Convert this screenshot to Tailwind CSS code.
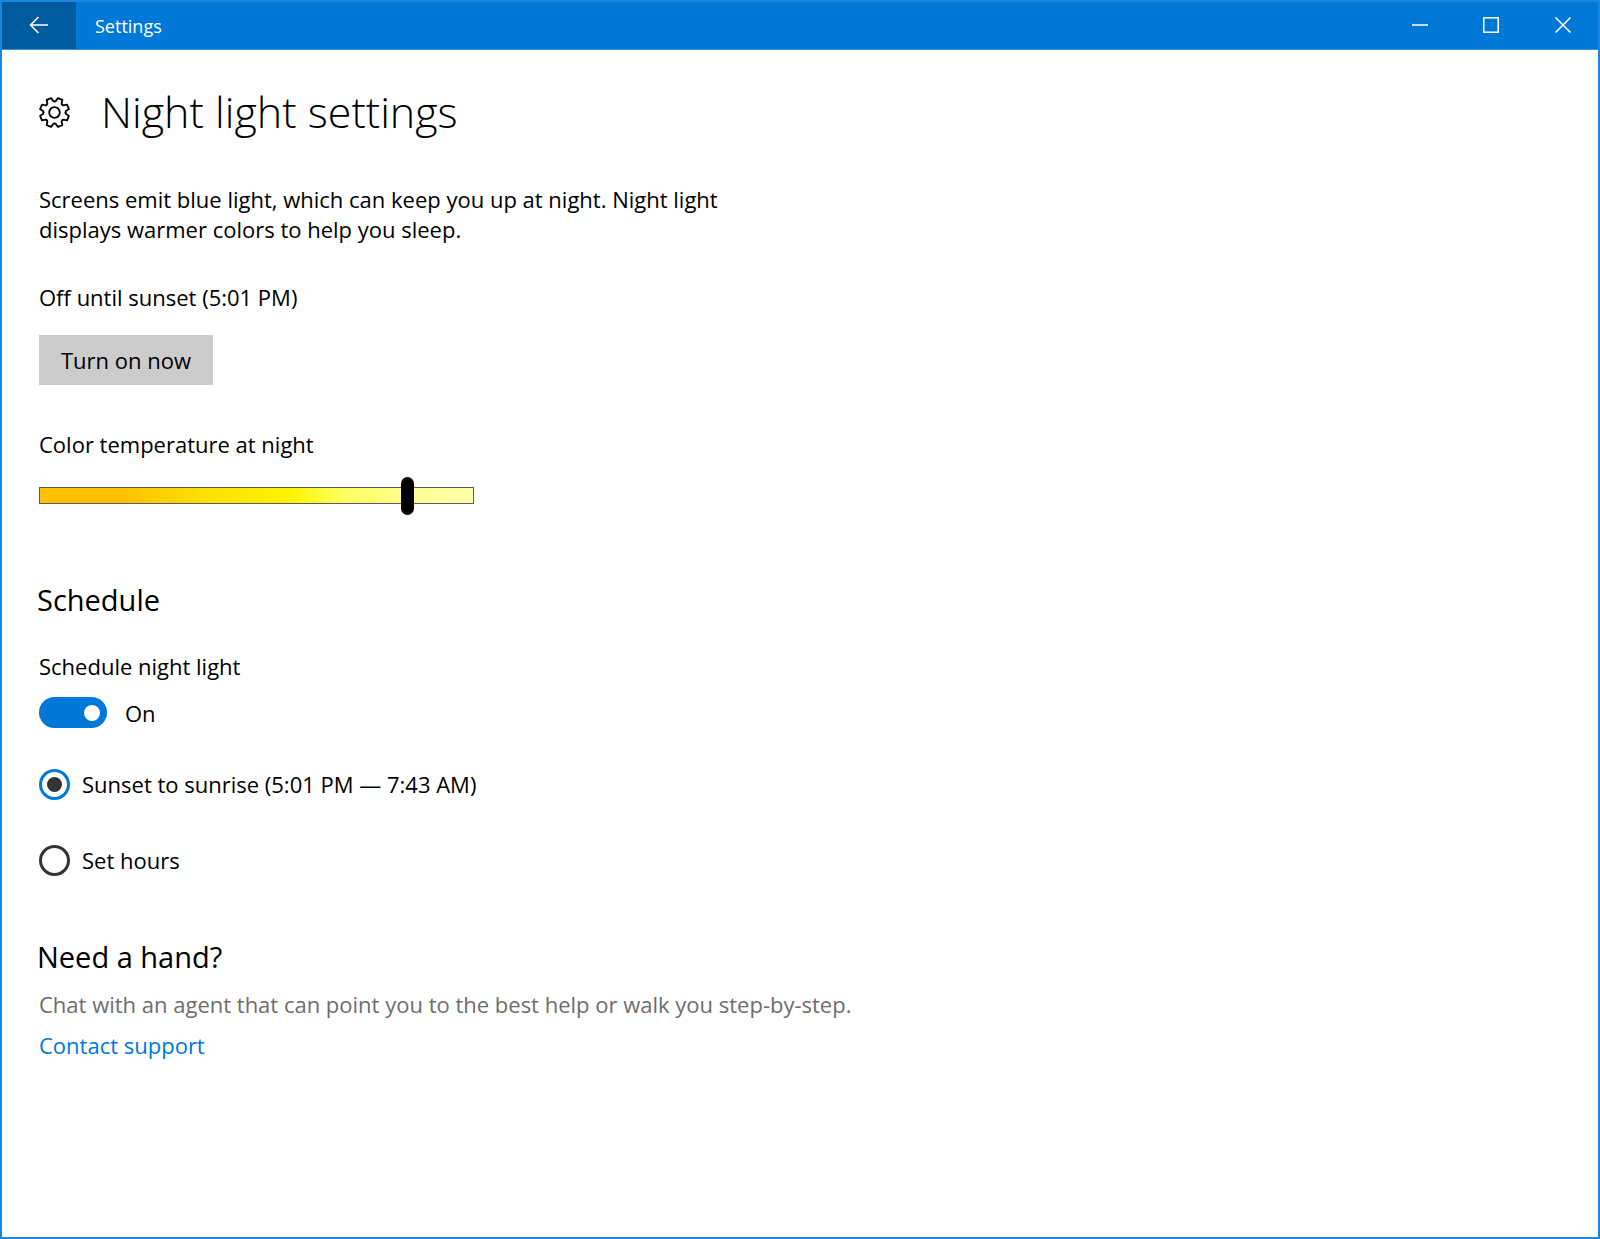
<!DOCTYPE html>
<html lang="en">
<head>
<meta charset="utf-8">
<meta name="viewport" content="width=device-width, initial-scale=1">
<title>Settings</title>
<script src="https://cdn.jsdelivr.net/npm/@tailwindcss/browser@4"></script>
</head>
<body class="flex min-h-screen flex-col border-2 border-[#1a86dd] bg-white font-['Open_Sans','Noto_Sans',sans-serif] text-[22px] leading-[30px] text-black">
  <header class="flex h-12 items-stretch border-b border-[#3393df] bg-[#0078d7] text-white">
    <button type="button" aria-label="Back" class="flex w-[74px] items-center justify-center bg-[#005a9e] pb-0.5">
      <svg class="size-5" viewBox="0 0 20 20" fill="none" stroke="currentColor" stroke-width="1.5"><path d="M19 10H1.5M9.5 2l-8 8 8 8"/></svg>
    </button>
    <span class="ml-[19px] self-center text-lg">Settings</span>
    <div class="ml-auto flex">
      <button type="button" aria-label="Minimize" class="flex w-[71px] items-center justify-center pb-0.5">
        <svg class="size-4" viewBox="0 0 16 16" fill="none" stroke="currentColor" stroke-width="1.5"><path d="M0 8h16"/></svg>
      </button>
      <button type="button" aria-label="Maximize" class="flex w-[72px] items-center justify-center pb-0.5">
        <svg class="size-4" viewBox="0 0 16 16" fill="none" stroke="currentColor" stroke-width="1.5"><rect x="0.8" y="0.8" width="14.4" height="14.4"/></svg>
      </button>
      <button type="button" aria-label="Close" class="flex w-[71px] items-center justify-center pb-0.5">
        <svg class="size-4" viewBox="0 0 16 16" fill="none" stroke="currentColor" stroke-width="1.5"><path d="M.5.5l15 15M15.5.5l-15 15"/></svg>
      </button>
    </div>
  </header>

  <main class="flex flex-col items-start px-[37px] pt-8">
    <div class="flex items-center gap-[31px]">
      <svg class="size-[31px]" viewBox="-15.5 -15.5 31 31" fill="none" stroke="currentColor" stroke-width="1.8" stroke-linecap="round" stroke-linejoin="round" aria-hidden="true">
        <defs><path id="tooth" d="M-4.2-10.2L-3.2-10.8L-2.4-14.6L2.4-14.6L3.2-10.8L4.2-10.2"/></defs>
        <circle r="5.3"/>
        <use href="#tooth" transform="rotate(22.5)"/>
        <use href="#tooth" transform="rotate(67.5)"/>
        <use href="#tooth" transform="rotate(112.5)"/>
        <use href="#tooth" transform="rotate(157.5)"/>
        <use href="#tooth" transform="rotate(202.5)"/>
        <use href="#tooth" transform="rotate(247.5)"/>
        <use href="#tooth" transform="rotate(292.5)"/>
        <use href="#tooth" transform="rotate(337.5)"/>
      </svg>
      <h1 class="text-[43px] leading-[60px] font-light">Night light settings</h1>
    </div>

    <p class="mt-[42px] max-w-[720px]">Screens emit blue light, which can keep you up at night. Night light displays warmer colors to help you sleep.</p>
    <p class="mt-[38px]">Off until sunset (5:01 PM)</p>
    <button type="button" class="mt-[23px] h-[50px] w-[174px] bg-[#ccc]">Turn on now</button>

    <label for="temperature" class="mt-11">Color temperature at night</label>
    <input id="temperature" type="range" min="0" max="100" value="86" class="mt-[17px] h-[38px] w-[435px] appearance-none bg-transparent [&::-webkit-slider-runnable-track]:h-[17px] [&::-webkit-slider-runnable-track]:border [&::-webkit-slider-runnable-track]:border-[#5c5c5c] [&::-webkit-slider-runnable-track]:bg-[linear-gradient(90deg,#ffc000_0%,#ffc000_19%,#ffe000_38%,#fff400_58%,#ffff60_70%,#ffff96_87%,#ffffaa_100%)] [&::-webkit-slider-thumb]:mt-[-11px] [&::-webkit-slider-thumb]:h-[38px] [&::-webkit-slider-thumb]:w-[13px] [&::-webkit-slider-thumb]:appearance-none [&::-webkit-slider-thumb]:rounded-full [&::-webkit-slider-thumb]:bg-black">

    <section class="mt-[66px] flex flex-col items-start">
      <h2 class="-ml-0.5 text-[29px] leading-10">Schedule</h2>
      <label for="schedule" class="mt-[31px]">Schedule night light</label>
      <div class="mt-4 flex h-[31px] items-center gap-[18px]">
        <input id="schedule" type="checkbox" role="switch" checked class="flex h-[31px] w-[68px] appearance-none items-center rounded-full bg-[#0078d7] px-[7px] before:size-4 before:rounded-full before:bg-white checked:justify-end">
        <span>On</span>
      </div>
      <label class="mt-10 flex h-8 items-center gap-3">
        <input type="radio" name="hours" checked class="flex size-[31px] appearance-none items-center justify-center rounded-full border-3 border-[#333] checked:border-[#0078d7] checked:before:size-[15px] checked:before:rounded-full checked:before:bg-[#333]">
        <span>Sunset to sunrise (5:01 PM — 7:43 AM)</span>
      </label>
      <label class="mt-11 flex h-8 items-center gap-3">
        <input type="radio" name="hours" class="flex size-[31px] appearance-none items-center justify-center rounded-full border-3 border-[#333] checked:border-[#0078d7] checked:before:size-[15px] checked:before:rounded-full checked:before:bg-[#333]">
        <span>Set hours</span>
      </label>
    </section>

    <section class="mt-[61px] flex flex-col items-start">
      <h2 class="-ml-0.5 text-[29px] leading-10">Need a hand?</h2>
      <p class="mt-3 text-[#6e6e6e]">Chat with an agent that can point you to the best help or walk you step-by-step.</p>
      <a href="#" class="mt-[11px] text-[#0078d7]">Contact support</a>
    </section>
  </main>
</body>
</html>
